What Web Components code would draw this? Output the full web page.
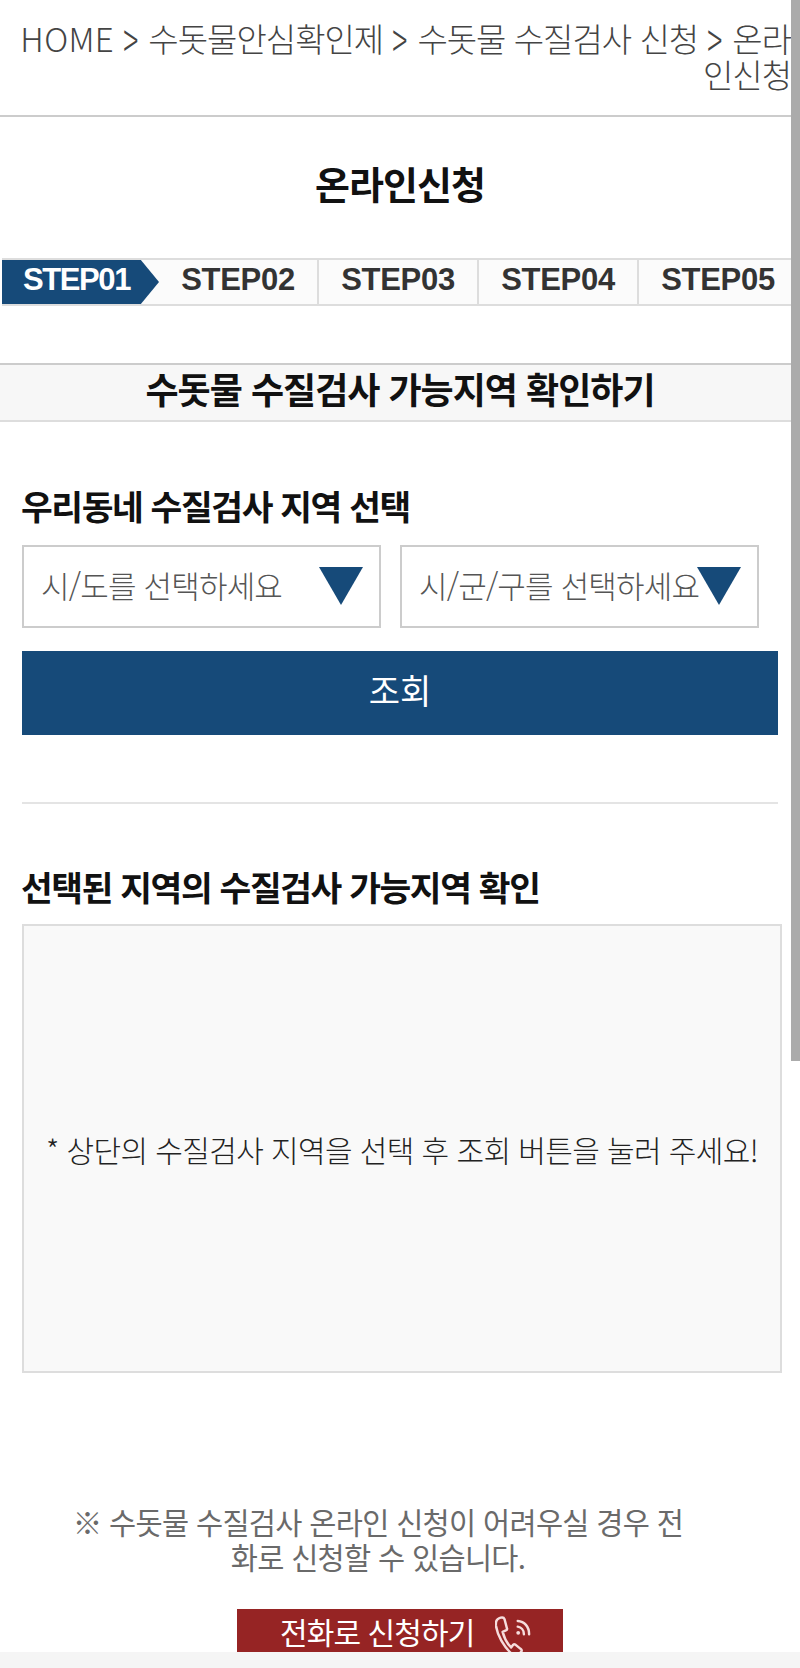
<!DOCTYPE html>
<html lang="ko">
<head>
<meta charset="utf-8">
<title>온라인신청</title>
<style>
  html, body { margin: 0; padding: 0; background: #fff; }
  body {
    position: relative;
    height: 1668px;
    overflow: hidden;
    font-family: "Noto Sans CJK KR", "Noto Sans", sans-serif;
    color: #222;
  }
</style>
</head>
<body>
  <bread-crumb items="HOME|수돗물안심확인제|수돗물 수질검사 신청|온라인신청"></bread-crumb>
  <page-title>온라인신청</page-title>
  <step-bar active="1" steps="STEP01,STEP02,STEP03,STEP04,STEP05"></step-bar>
  <band-title>수돗물 수질검사 가능지역 확인하기</band-title>
  <sub-title top="63">우리동네 수질검사 지역 선택</sub-title>
  <select-row>
    <region-select>시/도를 선택하세요</region-select>
    <region-select>시/군/구를 선택하세요</region-select>
  </select-row>
  <search-button>조회</search-button>
  <line-rule></line-rule>
  <sub-title top="62">선택된 지역의 수질검사 가능지역 확인</sub-title>
  <result-box>* 상단의 수질검사 지역을 선택 후 조회 버튼을 눌러 주세요!</result-box>
  <call-note>※ 수돗물 수질검사 온라인 신청이 어려우실 경우 전화로 신청할 수 있습니다.</call-note>
  <call-button>전화로 신청하기</call-button>
  <page-footer></page-footer>
  <scroll-thumb></scroll-thumb>

<script>
class BreadCrumb extends HTMLElement {
  constructor() {
    super()
    this.attachShadow({ mode: 'open' })
  }

  connectedCallback() {
    const items = this.getAttribute('items').split('|')
    const crumbs = items.map((name, i) => {
      const cls = name === 'HOME' ? ' class="home"' : ''
      const text = `<span${cls}>${name}</span>`
      return i < items.length - 1 ? `${text} <span class="sep">&gt;</span> ` : text
    }).join('')
    this.shadowRoot.innerHTML = `
      <style>
        :host {
          display: block;
          padding: 20px 9px 23px 20px;
          border-bottom: 2px solid #ccc;
          font-size: 33px;
          font-weight: 300;
          line-height: 36px;
          letter-spacing: -1px;
          color: #444;
          text-align: right;
          word-break: break-all;
        }
        .home { letter-spacing: 0.4px; }
        .sep {
          display: inline-block;
          line-height: 22px;
          transform: scale(0.85, 1.5);
          letter-spacing: 0;
        }
      </style>
      ${crumbs}`
  }
}
customElements.define('bread-crumb', BreadCrumb)

class PageTitle extends HTMLElement {
  constructor() {
    super()
    this.attachShadow({ mode: 'open' }).innerHTML = `
      <style>
        :host {
          display: block;
          padding: 46px 0 55px;
          font-size: 38px;
          font-weight: 700;
          line-height: 40px;
          letter-spacing: -1px;
          color: #111;
          text-align: center;
        }
      </style>
      <slot></slot>`
  }
}
customElements.define('page-title', PageTitle)

class StepBar extends HTMLElement {
  constructor() {
    super()
    this.attachShadow({ mode: 'open' })
  }

  connectedCallback() {
    const active = Number(this.getAttribute('active'))
    const cells = this.getAttribute('steps').split(',').map((name, i) => `
      <div class="cell ${i + 1 === active ? 'on' : ''}">
        ${i + 1 === active ? '<svg viewBox="0 0 156 44" preserveAspectRatio="none"><polygon points="0,0 138,0 156,22 138,44 0,44" fill="#164a79"/></svg>' : ''}
        <span>${name}</span>
      </div>`).join('')
    this.shadowRoot.innerHTML = `
      <style>
        :host {
          display: block;
          margin-left: 2px;
          border-top: 2px solid #ddd;
          border-bottom: 2px solid #ddd;
        }
        .row {
          display: grid;
          grid-template-columns: 157px repeat(4, 160px);
          height: 44px;
          background: #fbfbfb;
        }
        .cell {
          position: relative;
          display: flex;
          align-items: center;
          justify-content: center;
          padding-bottom: 4px;
          box-sizing: border-box;
          border-right: 2px solid #ddd;
          font-family: "Liberation Sans", sans-serif;
          font-size: 31px;
          font-weight: 700;
          letter-spacing: -0.3px;
          color: #333;
        }
        .cell.on {
          border-right: 0;
          color: #fff;
          justify-content: flex-start;
          padding-left: 21px;
          letter-spacing: -1.4px;
        }
        .cell svg { position: absolute; left: 0; top: 0; width: 157px; height: 44px; }
        .cell span { position: relative; }
      </style>
      <div class="row">${cells}</div>`
  }
}
customElements.define('step-bar', StepBar)

class BandTitle extends HTMLElement {
  constructor() {
    super()
    this.attachShadow({ mode: 'open' }).innerHTML = `
      <style>
        :host {
          display: block;
          margin-top: 57px;
          height: 55px;
          border-top: 2px solid #ccc;
          border-bottom: 2px solid #ddd;
          background: #f7f7f7;
          font-size: 36px;
          font-weight: 700;
          line-height: 47px;
          letter-spacing: -1px;
          color: #111;
          text-align: center;
        }
      </style>
      <slot></slot>`
  }
}
customElements.define('band-title', BandTitle)

class SubTitle extends HTMLElement {
  constructor() {
    super()
    this.attachShadow({ mode: 'open' }).innerHTML = `
      <style>
        :host {
          display: block;
          margin-top: ${this.getAttribute('top')}px;
          padding-left: 21px;
          font-size: 34.5px;
          font-weight: 700;
          line-height: 40px;
          letter-spacing: -1.4px;
          color: #111;
        }
      </style>
      <slot></slot>`
  }
}
customElements.define('sub-title', SubTitle)

class SelectRow extends HTMLElement {
  constructor() {
    super()
    this.attachShadow({ mode: 'open' }).innerHTML = `
      <style>
        :host {
          display: flex;
          gap: 19px;
          margin-top: 20px;
          padding-left: 22px;
        }
      </style>
      <slot></slot>`
  }
}
customElements.define('select-row', SelectRow)

class RegionSelect extends HTMLElement {
  constructor() {
    super()
    this.attachShadow({ mode: 'open' }).innerHTML = `
      <style>
        :host {
          box-sizing: border-box;
          position: relative;
          display: flex;
          align-items: center;
          width: 359px;
          height: 83px;
          padding: 0 0 4px 17px;
          border: 2px solid #ccc;
          font-size: 31px;
          font-weight: 300;
          letter-spacing: -0.8px;
          color: #555;
          white-space: nowrap;
        }
        svg { position: absolute; right: 16px; top: 20px; width: 44px; height: 38px; }
      </style>
      <slot></slot>
      <svg viewBox="0 0 44 38"><polygon points="0,0 44,0 22,38" fill="#164a79"/></svg>`
  }
}
customElements.define('region-select', RegionSelect)

class SearchButton extends HTMLElement {
  constructor() {
    super()
    this.attachShadow({ mode: 'open' }).innerHTML = `
      <style>
        :host {
          display: block;
          margin: 23px 22px 0;
          height: 84px;
          background: #164a79;
          font-size: 34px;
          font-weight: 400;
          line-height: 78px;
          color: #fff;
          text-align: center;
        }
      </style>
      <slot></slot>`
  }
}
customElements.define('search-button', SearchButton)

class LineRule extends HTMLElement {
  constructor() {
    super()
    this.attachShadow({ mode: 'open' }).innerHTML = `
      <style>
        :host {
          display: block;
          margin: 67px 22px 0;
          height: 2px;
          background: #e4e4e4;
        }
      </style>`
  }
}
customElements.define('line-rule', LineRule)

class ResultBox extends HTMLElement {
  constructor() {
    super()
    this.attachShadow({ mode: 'open' }).innerHTML = `
      <style>
        :host {
          box-sizing: border-box;
          display: flex;
          align-items: center;
          justify-content: center;
          margin: 18px 18px 0 22px;
          height: 449px;
          border: 2px solid #ddd;
          background: #f9f9f9;
          font-size: 30px;
          font-weight: 300;
          letter-spacing: -0.6px;
          color: #222;
          white-space: nowrap;
        }
      </style>
      <slot></slot>`
  }
}
customElements.define('result-box', ResultBox)

class CallNote extends HTMLElement {
  constructor() {
    super()
    this.attachShadow({ mode: 'open' }).innerHTML = `
      <style>
        :host {
          display: block;
          margin: 131px 112px 0 68px;
          font-size: 29.5px;
          font-weight: 400;
          line-height: 35px;
          letter-spacing: -0.7px;
          color: #6a6a6a;
          text-align: center;
          word-break: break-all;
        }
      </style>
      <slot></slot>`
  }
}
customElements.define('call-note', CallNote)

class CallButton extends HTMLElement {
  constructor() {
    super()
    this.attachShadow({ mode: 'open' }).innerHTML = `
      <style>
        :host {
          box-sizing: border-box;
          display: flex;
          align-items: flex-start;
          gap: 21px;
          width: 326px;
          height: 58px;
          margin: 35px 0 0 237px;
          padding-left: 43px;
          background: #962424;
          font-size: 30px;
          font-weight: 400;
          line-height: 45px;
          letter-spacing: -0.9px;
          color: #fff;
          white-space: nowrap;
        }
        svg { width: 36px; height: 44px; margin-top: 7px; flex: none; }
      </style>
      <slot></slot>
      <svg viewBox="0 0 38 46" fill="none" stroke="#f6dcdc" stroke-linecap="round" stroke-linejoin="round">
        <path stroke-width="2.6" d="M6 1.5 C2 2.5 0.5 6 1 10 C2.5 20 9 32 18 40 C20.5 42 23 43 25 41 L28 37 C28.5 36 28 35 27 34.5 L21.5 30 C20.5 29.5 19.5 29.5 19 30.5 L17 33 C13 29 9.5 22 8 16.5 L11.5 15 C12.5 14.5 13 13.5 12.5 12.5 L10 3 C9.5 1.5 8 1 6 1.5 Z"/>
        <path stroke-width="2.6" d="M24 5 C31 5.5 36 11 36 19"/>
        <path stroke-width="2.6" d="M24 11 C27.5 11.5 30.5 14.5 30.5 19"/>
        <circle cx="24.5" cy="17.5" r="2" fill="#f6dcdc" stroke="none"/>
      </svg>`
  }
}
customElements.define('call-button', CallButton)

class PageFooter extends HTMLElement {
  constructor() {
    super()
    this.attachShadow({ mode: 'open' }).innerHTML = `
      <style>
        :host {
          position: absolute;
          left: 0;
          right: 0;
          bottom: 0;
          height: 16px;
          background: #f5f5f5;
        }
      </style>`
  }
}
customElements.define('page-footer', PageFooter)

class ScrollThumb extends HTMLElement {
  constructor() {
    super()
    this.attachShadow({ mode: 'open' }).innerHTML = `
      <style>
        :host {
          position: absolute;
          top: 0;
          right: 0;
          width: 9px;
          height: 1061px;
          background: #ababab;
        }
      </style>`
  }
}
customElements.define('scroll-thumb', ScrollThumb)
</script>
</body>
</html>
